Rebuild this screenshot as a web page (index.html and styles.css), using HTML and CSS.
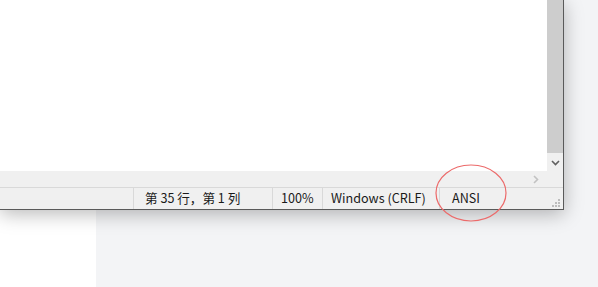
FILE: index.html
```html
<!DOCTYPE html>
<html lang="zh-CN">
<head>
    <meta charset="UTF-8">
    <title>记事本</title>
    <link rel="stylesheet" href="styles.css">
</head>
<body>
    <div class="page">
        <!-- Notepad window -->
        <div class="window">
            <div class="content-row">
                <div class="editor"></div>
                <div class="vscroll">
                    <div class="vthumb"></div>
                    <div class="vbottom">
                        <svg width="9" height="6" viewBox="0 0 9 6"><path d="M1 1 L4.5 4.5 L8 1" fill="none" stroke="#606060" stroke-width="1.6"/></svg>
                    </div>
                </div>
            </div>
            <div class="hscroll-row">
                <div class="hscroll">
                    <svg width="6" height="9" viewBox="0 0 6 9"><path d="M1 1 L4.5 4.5 L1 8" fill="none" stroke="#c2c2c2" stroke-width="1.6"/></svg>
                </div>
                <div class="corner"></div>
            </div>
            <div class="statusbar">
                <div class="status-spacer"></div>
                <div class="status-cell pos">第 35 行，第 1 列</div>
                <div class="status-cell zoom">100%</div>
                <div class="status-cell eol">Windows (CRLF)</div>
                <div class="status-cell enc">ANSI</div>
                <div class="grip">
                    <svg width="10" height="10" viewBox="0 0 10 10">
                        <rect x="7" y="1" width="2" height="2" fill="#bdbdbd"/>
                        <rect x="4" y="4" width="2" height="2" fill="#bdbdbd"/>
                        <rect x="7" y="4" width="2" height="2" fill="#bdbdbd"/>
                        <rect x="1" y="7" width="2" height="2" fill="#bdbdbd"/>
                        <rect x="4" y="7" width="2" height="2" fill="#bdbdbd"/>
                        <rect x="7" y="7" width="2" height="2" fill="#bdbdbd"/>
                    </svg>
                </div>
            </div>
        </div>

        <!-- annotation circle round the encoding -->
        <svg class="mark" width="74" height="60" viewBox="0 0 74 60">
            <ellipse cx="37" cy="30" rx="35" ry="28" fill="none" stroke="#ec6a6a" stroke-width="1.2"/>
        </svg>
    </div>
</body>
</html>
```

FILE: styles.css
```css
* {
    margin: 0;
    padding: 0;
    box-sizing: border-box;
}

body {
    background-color: #ffffff;
    font-family: "Noto Sans CJK SC", "Noto Sans", sans-serif;
    overflow: hidden;
}

.page {
    position: relative;
    width: 598px;
    height: 287px;
    background: linear-gradient(to right, #ffffff 96px, #f3f4f6 96px);
    overflow: hidden;
}

.window {
    width: 564px;
    height: 210px;
    display: flex;
    flex-direction: column;
    background-color: #f0f0f0;
    border-right: 1px solid #5a5a5a;
    border-bottom: 1px solid #5a5a5a;
    box-shadow: 0 4px 18px rgba(0, 0, 0, 0.28);
}

.content-row {
    display: flex;
    height: 171px;
}

.editor {
    flex: 1;
    background-color: #ffffff;
}

.vscroll {
    width: 16px;
    display: flex;
    flex-direction: column;
    background-color: #f0f0f0;
}

.vthumb {
    height: 153px;
    background-color: #cdcdcd;
}

.vbottom {
    flex: 1;
    display: flex;
    justify-content: center;
    align-items: center;
    padding-top: 2px;
}

.hscroll-row {
    display: flex;
    height: 16px;
}

.hscroll {
    flex: 1;
    display: flex;
    justify-content: flex-end;
    align-items: center;
    padding-right: 8px;
    background-color: #f0f0f0;
}

.corner {
    width: 16px;
    background-color: #f0f0f0;
}

.statusbar {
    flex: 1;
    display: flex;
    align-items: stretch;
    border-top: 1px solid #d9d9d9;
    font-size: 12.6px;
    color: #1a1a1a;
}

.status-spacer {
    width: 133px;
}

.status-cell {
    display: flex;
    align-items: center;
    border-left: 1px solid #d9d9d9;
    padding-bottom: 2px;
    white-space: nowrap;
}

.pos {
    width: 139px;
    padding-left: 11px;
}

.zoom {
    width: 50px;
    padding-left: 8px;
}

.eol {
    width: 117px;
    padding-left: 8px;
}

.enc {
    flex: 1;
    padding-left: 12px;
}

.grip {
    width: 16px;
    display: flex;
    align-items: flex-end;
    justify-content: flex-end;
    padding: 0 2px 1px 0;
}

.mark {
    position: absolute;
    left: 434px;
    top: 163px;
}
```
